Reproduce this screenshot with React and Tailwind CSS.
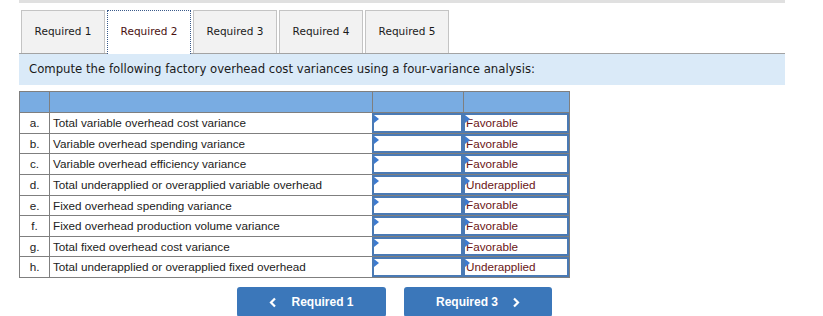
import React from "react";

const rows = [
  ["a.", "Total variable overhead cost variance", "Favorable"],
  ["b.", "Variable overhead spending variance", "Favorable"],
  ["c.", "Variable overhead efficiency variance", "Favorable"],
  ["d.", "Total underapplied or overapplied variable overhead", "Underapplied"],
  ["e.", "Fixed overhead spending variance", "Favorable"],
  ["f.", "Fixed overhead production volume variance", "Favorable"],
  ["g.", "Total fixed overhead cost variance", "Favorable"],
  ["h.", "Total underapplied or overapplied fixed overhead", "Underapplied"],
];

const tabs = ["Required 1", "Required 2", "Required 3", "Required 4", "Required 5"];

function Marker() {
  return (
    <span className="absolute left-0 top-0 w-0 h-0 border-t-[4px] border-t-transparent border-b-[4px] border-b-transparent border-l-[5px] border-l-[#3d7bd0]" />
  );
}

export default function App() {
  return (
    <div className="w-[823px] h-[316px] bg-white overflow-hidden relative font-['Liberation_Sans',Arial,sans-serif]">
      <div className="ml-[19px] w-[766px]">
        <div className="h-[3px] bg-[#e0e0e0]" />
        <div className="mt-[7px] flex items-end h-[44px] border-b border-[#a3a3a3] pl-[2px] gap-[2px] font-['DejaVu_Sans',Verdana,sans-serif] text-[10.5px] text-[#1a1a1a]">
          {tabs.map((t, i) =>
            i === 1 ? (
              <div
                key={t}
                className="w-[84px] h-[44px] -mb-px pb-px bg-white border border-dotted border-[#3a5a8a] border-b-0 flex items-center justify-center text-[#4a1010]"
              >
                {t}
              </div>
            ) : (
              <div
                key={t}
                className="w-[84px] h-[43px] bg-[#f2f2f2] border border-[#c4c4c4] border-b-0 flex items-center justify-center"
              >
                {t}
              </div>
            )
          )}
        </div>
        <div className="h-[31px] bg-[#daeaf8] flex items-center pl-[10px] font-['DejaVu_Sans',Verdana,sans-serif] text-[11.7px] text-[#1a1a1a]">
          Compute the following factory overhead cost variances using a four-variance analysis:
        </div>
        <div className="mt-[6px] w-[551px] border border-[#7f7f7f] text-[11.7px] text-[#222]">
          <div className="flex h-[20px] bg-[#79ace2]">
            <div className="w-[29px]" />
            <div className="w-[323px] border-l border-[#7f7f7f]" />
            <div className="w-[91px] border-l border-[#7f7f7f]" />
            <div className="flex-1 border-l border-[#7f7f7f]" />
          </div>
          {rows.map(([l, d, s]) => (
            <div key={l} className="flex h-[20.625px] border-t border-[#7f7f7f]">
              <div className="w-[29px] flex items-center justify-center">{l}</div>
              <div className="w-[323px] border-l border-[#7f7f7f] flex items-center pl-[3px] whitespace-nowrap">{d}</div>
              <div className="w-[91px] relative border-2 border-[#4a7ab5] bg-white">
                <Marker />
              </div>
              <div className="flex-1 relative border-2 border-[#4a7ab5] bg-white flex items-center pl-[1px] text-[#6b1616] leading-none">
                <Marker />
                {s}
              </div>
            </div>
          ))}
        </div>
        <div className="mt-[9px] ml-[218px] flex gap-[18px]">
          <div className="w-[149px] h-[30px] bg-[#3b77ba] rounded-[3px] flex items-center justify-center gap-[14px] text-white font-bold text-[12px]">
            <svg width="8" height="11" viewBox="0 0 8 11"><path d="M6 1.5 L2 5.5 L6 9.5" fill="none" stroke="white" strokeWidth="2.2" /></svg>
            <span>Required 1</span>
          </div>
          <div className="w-[148px] h-[30px] bg-[#3b77ba] rounded-[3px] flex items-center justify-center gap-[14px] text-white font-bold text-[12px]">
            <span>Required 3</span>
            <svg width="8" height="11" viewBox="0 0 8 11"><path d="M2 1.5 L6 5.5 L2 9.5" fill="none" stroke="white" strokeWidth="2.2" /></svg>
          </div>
        </div>
      </div>
    </div>
  );
}
